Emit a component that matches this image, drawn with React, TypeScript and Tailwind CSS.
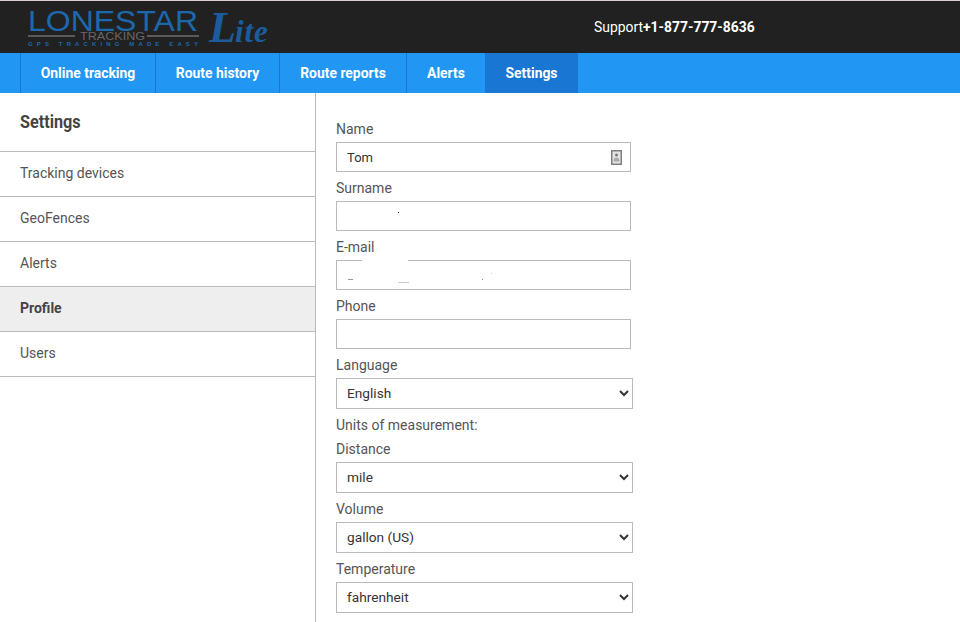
import React from "react";

const Field = ({ label, value, children }: { label: string; value?: string; children?: React.ReactNode }) => (
  <div className="flex flex-col">
    <label className="h-[20px] text-[14px] leading-[20px] text-[#555]">{label}</label>
    <div className="relative mt-[3px] mb-[6px] h-[30px] w-[295px]">
      <input
        readOnly
        value={value ?? ""}
        className="h-full w-full border border-[#bbb] bg-white px-[10px] text-[13px] text-[#333] outline-none"
      />
      {children}
    </div>
  </div>
);

const Sel = ({ label, value }: { label: string; value: string }) => (
  <div className="flex flex-col">
    <label className="h-[20px] text-[14px] leading-[20px] text-[#555]">{label}</label>
    <select
      defaultValue={value}
      className="mt-[3px] mb-[6px] h-[31px] w-[297px] border border-[#bbb] bg-white px-[6px] pb-[1px] text-[13.7px] text-[#333] outline-none"
    >
      <option>{value}</option>
    </select>
  </div>
);

const Logo = () => (
  <svg width="250" height="52" viewBox="0 0 250 52" className="block">
    <text x="0" y="30" fontSize="29" textLength="170" lengthAdjust="spacingAndGlyphs" fill="#1c68ad" fontFamily='"Liberation Sans", sans-serif'>LONESTAR</text>
    <rect x="0" y="34" width="47" height="2" fill="#5a5a5a" />
    <rect x="119" y="34" width="52" height="2" fill="#5a5a5a" />
    <text x="52" y="39" fontSize="10" textLength="65" lengthAdjust="spacingAndGlyphs" fill="#666" fontFamily='"Liberation Sans", sans-serif'>TRACKING</text>
    <text x="0" y="45" fontSize="6" fontWeight="700" textLength="170" lengthAdjust="spacing" fill="#1c68ad" fontFamily='"Liberation Sans", sans-serif'>GPS TRACKING MADE EASY</text>
    <text x="181" y="41" fontStyle="italic" fontWeight="700" fill="#1c5c9c" fontFamily='"Liberation Serif", serif'>
      <tspan fontSize="44">L</tspan>
      <tspan fontSize="31" dx="-1" letterSpacing="1">ite</tspan>
    </text>
  </svg>
);

const navItems = [
  { t: "Online tracking", w: "w-[135px]" },
  { t: "Route history", w: "w-[124px]" },
  { t: "Route reports", w: "w-[127px]" },
  { t: "Alerts", w: "w-[79px]" },
];
const sideItems = ["Tracking devices", "GeoFences", "Alerts", "Profile", "Users"];

export default function App() {
  return (
    <div className="flex h-[622px] w-[960px] flex-col overflow-hidden bg-white" style={{ fontFamily: "Roboto, sans-serif" }}>
      <header className="flex h-[53px] shrink-0 items-start border-t border-[#dccdd0] bg-[#212121]">
        <div className="ml-[28px] w-[566px]">
          <Logo />
        </div>
        <div className="mt-[16px] text-[13.9px] leading-[20px] text-white">
          Support<b className="font-bold">+1-877-777-8636</b>
        </div>
      </header>
      <nav className="flex h-[40px] shrink-0 bg-[#2196f3] pl-[20px] text-[13.9px] font-bold text-white">
        {navItems.map(({ t, w }) => (
          <a key={t} className={"flex items-center justify-center border-l border-[#1976d2] " + w}>{t}</a>
        ))}
        <a className="flex w-[93px] items-center justify-center bg-[#1976d2]">Settings</a>
      </nav>
      <div className="flex min-h-0 flex-1">
        <aside className="w-[316px] shrink-0 border-r border-[#bbb]">
          <div className="flex h-[59px] items-center border-b border-[#bbb] pl-[20px] pb-[2px] text-[18px] font-bold text-[#444]">
            <span className="origin-left scale-x-90">Settings</span>
          </div>
          {sideItems.map((t) => (
            <div
              key={t}
              className={
                "flex h-[45px] items-center border-b border-[#bbb] pb-[2px] pl-[20px] text-[14px] " +
                (t === "Profile" ? "bg-[#eee] font-bold text-[#444]" : "text-[#555]")
              }
            >
              {t}
            </div>
          ))}
        </aside>
        <main className="pl-[20px] pt-[26px]">
          <Field label="Name" value="Tom">
            <svg width="11" height="15" viewBox="0 0 11 15" className="absolute right-[9px] top-[8px]">
              <rect x="0.75" y="0.75" width="9.5" height="13.5" fill="#e4e4e4" stroke="#808080" strokeWidth="1.5" />
              <circle cx="5.5" cy="5" r="1.5" fill="#777" />
              <path d="M2.5 11.5c0-2.4 1.2-4 3-4s3 1.6 3 4z" fill="#aaa" />
            </svg>
          </Field>
          <Field label="Surname">
            <span className="absolute left-[62px] top-[11px] h-px w-px bg-[#222]" />
          </Field>
          <Field label="E-mail">
            <span className="absolute top-0 left-[26px] h-px w-[46px] bg-white" />
            <span className="absolute left-[12px] top-[19px] h-px w-[5px] bg-[#999]" />
            <span className="absolute left-[62px] top-[22px] h-px w-[11px] bg-[#ccc]" />
            <span className="absolute left-[146px] top-[19px] h-px w-px bg-[#69c]" />
            <span className="absolute left-[155px] top-[13px] h-px w-px bg-[#ccc]" />
          </Field>
          <Field label="Phone" />
          <Sel label="Language" value="English" />
          <div className="mb-[4px] h-[20px] text-[14px] leading-[20px] text-[#555]">Units of measurement:</div>
          <Sel label="Distance" value="mile" />
          <Sel label="Volume" value="gallon (US)" />
          <Sel label="Temperature" value="fahrenheit" />
        </main>
      </div>
    </div>
  );
}
